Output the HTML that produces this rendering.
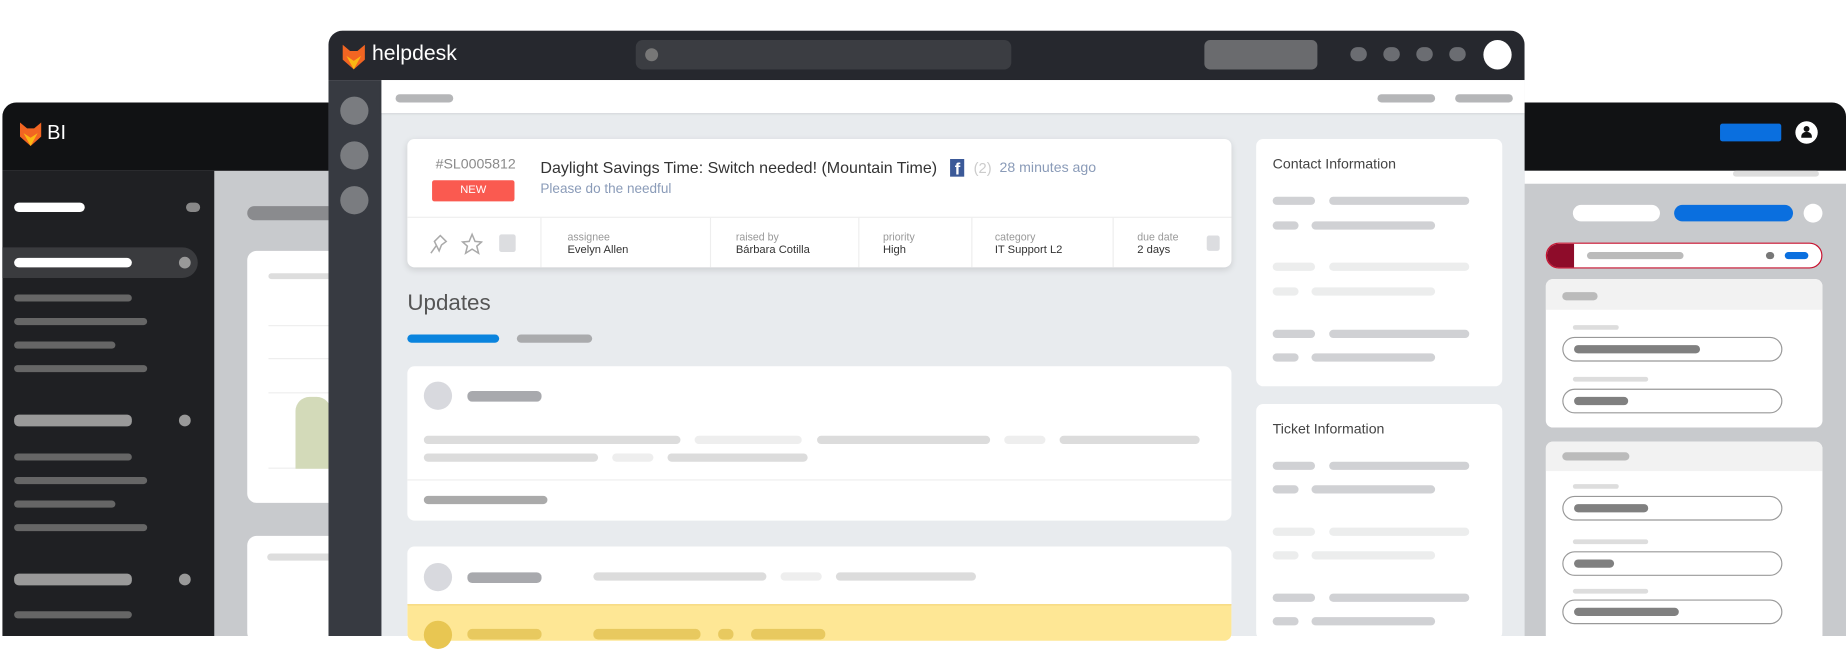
<!DOCTYPE html>
<html><head><meta charset="utf-8"><style>
*{margin:0;padding:0;box-sizing:border-box}
html,body{width:1846px;height:636px;overflow:hidden;background:#fff;font-family:"Liberation Sans",sans-serif}
#w{position:absolute;left:0;top:0;width:1568px;height:540px;transform:scale(1.17730,1.17778);transform-origin:0 0}
.a{position:absolute}
.b{position:absolute;border-radius:4px}
.t{position:absolute;white-space:nowrap}
</style></head><body><div id="w">
<div class="a" style="left:2px;top:87px;width:1566px;height:453px;background:#c8cacd;border-radius:12px 12px 0 0;overflow:hidden">
 <div class="a" style="left:0;top:0;width:1566px;height:58px;background:#111214"></div>
 <div class="a" style="left:0;top:58px;width:180px;height:395px;background:#1f2023"></div>
 <div class="a" style="left:1293px;top:58px;width:273px;height:11px;background:#fff"></div>
</div>
<svg class="a" style="left:16px;top:103px" width="20" height="22" viewBox="0 0 20 22"><polygon points="1,1 7,6 13,6 19,1 19,13 10,21 1,13" fill="#f26522"/><polygon points="4,10 10,14 16,10 10,21" fill="#fcb813"/></svg>
<div class="t" style="left:40px;top:103px;color:#fff;font-size:17px">BI</div>
<div class="b" style="left:1461px;top:105px;width:52px;height:15px;background:#0a6fdf;border-radius:2px"></div>
<div class="a" style="left:1525px;top:103px;width:19px;height:19px;border-radius:50%;background:#fff"></div>
<div class="a" style="left:1532px;top:107px;width:5px;height:5px;border-radius:50%;background:#111"></div>
<div class="a" style="left:1530px;top:112px;width:9px;height:5px;border-radius:4px 4px 0 0;background:#111"></div>
<div class="b" style="left:12px;top:172px;width:60px;height:8px;background:#fff"></div>
<div class="b" style="left:158px;top:172px;width:12px;height:8px;background:#888"></div>
<div class="a" style="left:2px;top:210px;width:166px;height:26px;background:#3a3b3e;border-radius:0 13px 13px 0"></div>
<div class="b" style="left:12px;top:219px;width:100px;height:8px;background:#fff"></div>
<div class="a" style="left:152px;top:218px;width:10px;height:10px;border-radius:50%;background:#999"></div>
<div class="b" style="left:12px;top:250px;width:100px;height:6px;background:#666"></div>
<div class="b" style="left:12px;top:270px;width:113px;height:6px;background:#666"></div>
<div class="b" style="left:12px;top:290px;width:86px;height:6px;background:#666"></div>
<div class="b" style="left:12px;top:310px;width:113px;height:6px;background:#666"></div>
<div class="b" style="left:12px;top:352px;width:100px;height:10px;background:#999"></div>
<div class="a" style="left:152px;top:352px;width:10px;height:10px;border-radius:50%;background:#999"></div>
<div class="b" style="left:12px;top:385px;width:100px;height:6px;background:#666"></div>
<div class="b" style="left:12px;top:405px;width:113px;height:6px;background:#666"></div>
<div class="b" style="left:12px;top:425px;width:86px;height:6px;background:#666"></div>
<div class="b" style="left:12px;top:445px;width:113px;height:6px;background:#666"></div>
<div class="b" style="left:12px;top:487px;width:100px;height:10px;background:#999"></div>
<div class="a" style="left:152px;top:487px;width:10px;height:10px;border-radius:50%;background:#999"></div>
<div class="b" style="left:12px;top:519px;width:100px;height:6px;background:#666"></div>
<div class="b" style="left:210px;top:175px;width:80px;height:12px;background:#8a8b8e;border-radius:6px"></div>
<div class="a" style="left:210px;top:213px;width:80px;height:214px;background:#fff;border-radius:8px"></div>
<div class="b" style="left:228px;top:232px;width:60px;height:5px;background:#ddd"></div>
<div class="a" style="left:228px;top:276px;width:60px;height:1px;background:#eee"></div>
<div class="a" style="left:228px;top:304px;width:60px;height:1px;background:#eee"></div>
<div class="a" style="left:228px;top:333px;width:60px;height:1px;background:#eee"></div>
<div class="a" style="left:228px;top:397px;width:60px;height:1px;background:#eee"></div>
<div class="a" style="left:251px;top:337px;width:30px;height:61px;background:#d3dab9;border-radius:12px 12px 0 0"></div>
<div class="a" style="left:210px;top:455px;width:80px;height:90px;background:#fff;border-radius:8px"></div>
<div class="b" style="left:227px;top:470px;width:60px;height:6px;background:#ddd"></div>
<div class="b" style="left:1472px;top:145px;width:73px;height:5px;background:#ddd"></div>
<div class="a" style="left:1336px;top:174px;width:74px;height:14px;background:#fff;border-radius:7px"></div>
<div class="a" style="left:1422px;top:174px;width:101px;height:14px;background:#0a6fdf;border-radius:7px"></div>
<div class="a" style="left:1532px;top:173px;width:16px;height:16px;background:#fff;border-radius:50%"></div>
<div class="a" style="left:1313px;top:206px;width:235px;height:22px;background:#fff;border:1.5px solid #c8102e;border-radius:11px;overflow:hidden"><div class="a" style="left:0;top:0;width:23px;height:22px;background:#8e0c2a"></div></div>
<div class="b" style="left:1348px;top:214px;width:82px;height:6px;background:#bbb"></div>
<div class="a" style="left:1500px;top:214px;width:7px;height:6px;border-radius:3px;background:#777"></div>
<div class="a" style="left:1516px;top:214px;width:20px;height:6px;border-radius:3px;background:#0a6fdf"></div>
<div class="a" style="left:1313px;top:237px;width:235px;height:126px;background:#fff;border-radius:6px;overflow:hidden"><div class="a" style="left:0;top:0;width:235px;height:26px;background:#f2f2f2"></div></div>
<div class="b" style="left:1327px;top:248px;width:30px;height:7px;background:#bbb"></div>
<div class="b" style="left:1336px;top:276px;width:39px;height:4px;background:#ddd"></div>
<div class="a" style="left:1327px;top:286px;width:187px;height:21px;border:1.5px solid #999;border-radius:11px"></div>
<div class="b" style="left:1337px;top:293px;width:107px;height:7px;background:#808080"></div>
<div class="b" style="left:1336px;top:320px;width:64px;height:4px;background:#ddd"></div>
<div class="a" style="left:1327px;top:330px;width:187px;height:21px;border:1.5px solid #999;border-radius:11px"></div>
<div class="b" style="left:1337px;top:337px;width:46px;height:7px;background:#808080"></div>
<div class="a" style="left:1313px;top:375px;width:235px;height:170px;background:#fff;border-radius:6px;overflow:hidden"><div class="a" style="left:0;top:0;width:235px;height:25px;background:#f2f2f2"></div></div>
<div class="b" style="left:1327px;top:384px;width:57px;height:7px;background:#bbb"></div>
<div class="b" style="left:1336px;top:411px;width:39px;height:4px;background:#ddd"></div>
<div class="a" style="left:1327px;top:421px;width:187px;height:21px;border:1.5px solid #999;border-radius:11px"></div>
<div class="b" style="left:1337px;top:428px;width:63px;height:7px;background:#808080"></div>
<div class="b" style="left:1336px;top:458px;width:64px;height:4px;background:#ddd"></div>
<div class="a" style="left:1327px;top:468px;width:187px;height:21px;border:1.5px solid #999;border-radius:11px"></div>
<div class="b" style="left:1337px;top:475px;width:34px;height:7px;background:#808080"></div>
<div class="b" style="left:1336px;top:500px;width:64px;height:4px;background:#ddd"></div>
<div class="a" style="left:1327px;top:509px;width:187px;height:21px;border:1.5px solid #999;border-radius:11px"></div>
<div class="b" style="left:1337px;top:516px;width:89px;height:7px;background:#808080"></div>

<div class="a" style="left:279px;top:26px;width:1016px;height:514px;background:#e8ebee;border-radius:12px 12px 0 0;overflow:hidden">
 <div class="a" style="left:0;top:0;width:1016px;height:42px;background:#26282e"></div>
 <div class="a" style="left:0;top:42px;width:45px;height:472px;background:#373a41"></div>
 <div class="a" style="left:45px;top:42px;width:971px;height:28px;background:#fff;box-shadow:0 1px 2px rgba(0,0,0,.15)"></div>
</div>
<svg class="a" style="left:290px;top:37px" width="21" height="23" viewBox="0 0 20 22"><polygon points="1,1 7,6 13,6 19,1 19,13 10,21 1,13" fill="#f26522"/><polygon points="4,10 10,14 16,10 10,21" fill="#fcb813"/></svg>
<div class="t" style="left:316px;top:35px;color:#fff;font-size:18px">helpdesk</div>
<div class="a" style="left:540px;top:34px;width:319px;height:25px;background:#3b3d42;border-radius:6px"></div>
<div class="a" style="left:548px;top:41px;width:11px;height:11px;background:#777;border-radius:50%"></div>
<div class="a" style="left:1023px;top:34px;width:96px;height:25px;background:#6a6b6e;border-radius:5px"></div>
<div class="a" style="left:1147px;top:40px;width:14px;height:12px;background:#6b6d72;border-radius:6px"></div>
<div class="a" style="left:1175px;top:40px;width:14px;height:12px;background:#6b6d72;border-radius:6px"></div>
<div class="a" style="left:1203px;top:40px;width:14px;height:12px;background:#6b6d72;border-radius:6px"></div>
<div class="a" style="left:1231px;top:40px;width:14px;height:12px;background:#6b6d72;border-radius:6px"></div>
<div class="a" style="left:1260px;top:34px;width:24px;height:25px;background:#fff;border-radius:50%"></div>
<div class="a" style="left:289px;top:82px;width:24px;height:24px;background:#7a7c80;border-radius:50%"></div>
<div class="a" style="left:289px;top:120px;width:24px;height:24px;background:#7a7c80;border-radius:50%"></div>
<div class="a" style="left:289px;top:158px;width:24px;height:24px;background:#7a7c80;border-radius:50%"></div>
<div class="b" style="left:336px;top:80px;width:49px;height:7px;background:#b5b6b8"></div>
<div class="b" style="left:1170px;top:80px;width:49px;height:7px;background:#b5b6b8"></div>
<div class="b" style="left:1236px;top:80px;width:49px;height:7px;background:#b5b6b8"></div>

<div class="a" style="left:346px;top:118px;width:700px;height:109px;background:#fff;border-radius:6px;box-shadow:0 2px 6px rgba(0,0,0,.12)"></div>
<div class="t" style="left:370px;top:132px;color:#8a8a8a;font-size:12px">#SL0005812</div>
<div class="a" style="left:367px;top:153px;width:70px;height:18px;background:#fa5a50;border-radius:2px;color:#fff;font-size:9.5px;text-align:center;line-height:18px">NEW</div>
<div class="t" style="left:459px;top:135px;color:#333;font-size:13.6px">Daylight Savings Time: Switch needed! (Mountain Time)</div>
<div class="a" style="left:807px;top:135px;width:12px;height:15px;background:#3b5998"></div>
<div class="t" style="left:811px;top:135px;color:#fff;font-size:14px;font-weight:bold">f</div>
<div class="t" style="left:827px;top:136px;color:#ccc;font-size:12.5px">(2)</div>
<div class="t" style="left:849px;top:135px;color:#8a9bb8;font-size:12px">28 minutes ago</div>
<div class="t" style="left:459px;top:155px;color:#8a9bb8;font-size:11.5px">Please do the needful</div>
<div class="a" style="left:346px;top:184px;width:700px;height:1px;background:#eee"></div>
<svg class="a" style="left:362px;top:197px" width="48" height="20" viewBox="0 0 48 20"><path d="M4 18 L9 11 M7 8 L12 3 L17 8 L13 11 L11 16 Z" fill="none" stroke="#aaa" stroke-width="1.3"/><path d="M39 2 L41.5 8 L47 8.5 L43 12 L44.5 18 L39 14.5 L33.5 18 L35 12 L31 8.5 L36.5 8 Z" fill="none" stroke="#aaa" stroke-width="1.3"/></svg>
<div class="a" style="left:424px;top:199px;width:14px;height:15px;background:#dcdde0;border-radius:2px"></div>
<div class="a" style="left:459px;top:185px;width:1px;height:42px;background:#eee"></div>
<div class="a" style="left:603px;top:185px;width:1px;height:42px;background:#eee"></div>
<div class="a" style="left:729px;top:185px;width:1px;height:42px;background:#eee"></div>
<div class="a" style="left:825px;top:185px;width:1px;height:42px;background:#eee"></div>
<div class="a" style="left:945px;top:185px;width:1px;height:42px;background:#eee"></div>
<div class="t" style="left:482px;top:196px;color:#999;font-size:9px">assignee</div>
<div class="t" style="left:482px;top:207px;color:#333;font-size:9.5px">Evelyn Allen</div>
<div class="t" style="left:625px;top:196px;color:#999;font-size:9px">raised by</div>
<div class="t" style="left:625px;top:207px;color:#333;font-size:9.5px">Bárbara Cotilla</div>
<div class="t" style="left:750px;top:196px;color:#999;font-size:9px">priority</div>
<div class="t" style="left:750px;top:207px;color:#333;font-size:9.5px">High</div>
<div class="t" style="left:845px;top:196px;color:#999;font-size:9px">category</div>
<div class="t" style="left:845px;top:207px;color:#333;font-size:9.5px">IT Support L2</div>
<div class="t" style="left:966px;top:196px;color:#999;font-size:9px">due date</div>
<div class="t" style="left:966px;top:207px;color:#333;font-size:9.5px">2 days</div>
<div class="a" style="left:1025px;top:200px;width:11px;height:13px;background:#dcdde0;border-radius:2px"></div>

<div class="t" style="left:346px;top:247px;color:#555;font-size:19px">Updates</div>
<div class="a" style="left:346px;top:284px;width:78px;height:7px;background:#0a84de;border-radius:4px"></div>
<div class="a" style="left:439px;top:284px;width:64px;height:7px;background:#aaabad;border-radius:4px"></div>

<div class="a" style="left:346px;top:311px;width:700px;height:131px;background:#fff;border-radius:6px"></div>
<div class="a" style="left:360px;top:324px;width:24px;height:24px;background:#d8d9de;border-radius:50%"></div>
<div class="b" style="left:397px;top:332px;width:63px;height:9px;background:#a8a9ad"></div>
<div class="b" style="left:360px;top:370px;width:218px;height:7px;background:#dcdcdc"></div>
<div class="b" style="left:590px;top:370px;width:91px;height:7px;background:#eee"></div>
<div class="b" style="left:694px;top:370px;width:147px;height:7px;background:#dcdcdc"></div>
<div class="b" style="left:853px;top:370px;width:35px;height:7px;background:#eee"></div>
<div class="b" style="left:900px;top:370px;width:119px;height:7px;background:#dcdcdc"></div>
<div class="b" style="left:360px;top:385px;width:148px;height:7px;background:#dcdcdc"></div>
<div class="b" style="left:520px;top:385px;width:35px;height:7px;background:#eee"></div>
<div class="b" style="left:567px;top:385px;width:119px;height:7px;background:#dcdcdc"></div>
<div class="a" style="left:346px;top:407px;width:700px;height:1px;background:#eee"></div>
<div class="b" style="left:360px;top:421px;width:105px;height:7px;background:#aaa"></div>

<div class="a" style="left:346px;top:464px;width:700px;height:80px;background:#fff;border-radius:6px;overflow:hidden"><div class="a" style="left:0;top:49px;width:700px;height:40px;background:#fee795;border-top:1px solid #f5d77a"></div></div>
<div class="a" style="left:360px;top:478px;width:24px;height:24px;background:#d8d9de;border-radius:50%"></div>
<div class="b" style="left:397px;top:486px;width:63px;height:9px;background:#a8a9ad"></div>
<div class="b" style="left:504px;top:486px;width:147px;height:7px;background:#dcdcdc"></div>
<div class="b" style="left:663px;top:486px;width:35px;height:7px;background:#eee"></div>
<div class="b" style="left:710px;top:486px;width:119px;height:7px;background:#dcdcdc"></div>
<div class="a" style="left:360px;top:527px;width:24px;height:24px;background:#e8c652;border-radius:50%"></div>
<div class="b" style="left:397px;top:534px;width:63px;height:9px;background:#e8c95f"></div>
<div class="b" style="left:504px;top:534px;width:91px;height:9px;background:#e8c95f"></div>
<div class="b" style="left:610px;top:534px;width:13px;height:9px;background:#e8c95f"></div>
<div class="b" style="left:638px;top:534px;width:63px;height:9px;background:#e8c95f"></div>

<div class="a" style="left:1067px;top:118px;width:209px;height:210px;background:#fff;border-radius:6px"></div>
<div class="t" style="left:1081px;top:132px;color:#444;font-size:12px">Contact Information</div>
<div class="b" style="left:1081px;top:167px;width:36px;height:7px;background:#d0d1d4"></div>
<div class="b" style="left:1129px;top:167px;width:119px;height:7px;background:#d0d1d4"></div>
<div class="b" style="left:1081px;top:188px;width:22px;height:7px;background:#d0d1d4"></div>
<div class="b" style="left:1114px;top:188px;width:105px;height:7px;background:#d0d1d4"></div>
<div class="b" style="left:1081px;top:223px;width:36px;height:7px;background:#eceded"></div>
<div class="b" style="left:1129px;top:223px;width:119px;height:7px;background:#eceded"></div>
<div class="b" style="left:1081px;top:244px;width:22px;height:7px;background:#eceded"></div>
<div class="b" style="left:1114px;top:244px;width:105px;height:7px;background:#eceded"></div>
<div class="b" style="left:1081px;top:280px;width:36px;height:7px;background:#d0d1d4"></div>
<div class="b" style="left:1129px;top:280px;width:119px;height:7px;background:#d0d1d4"></div>
<div class="b" style="left:1081px;top:300px;width:22px;height:7px;background:#d0d1d4"></div>
<div class="b" style="left:1114px;top:300px;width:105px;height:7px;background:#d0d1d4"></div>

<div class="a" style="left:1067px;top:343px;width:209px;height:200px;background:#fff;border-radius:6px"></div>
<div class="t" style="left:1081px;top:357px;color:#444;font-size:12px">Ticket Information</div>
<div class="b" style="left:1081px;top:392px;width:36px;height:7px;background:#d0d1d4"></div>
<div class="b" style="left:1129px;top:392px;width:119px;height:7px;background:#d0d1d4"></div>
<div class="b" style="left:1081px;top:412px;width:22px;height:7px;background:#d0d1d4"></div>
<div class="b" style="left:1114px;top:412px;width:105px;height:7px;background:#d0d1d4"></div>
<div class="b" style="left:1081px;top:448px;width:36px;height:7px;background:#eceded"></div>
<div class="b" style="left:1129px;top:448px;width:119px;height:7px;background:#eceded"></div>
<div class="b" style="left:1081px;top:468px;width:22px;height:7px;background:#eceded"></div>
<div class="b" style="left:1114px;top:468px;width:105px;height:7px;background:#eceded"></div>
<div class="b" style="left:1081px;top:504px;width:36px;height:7px;background:#d0d1d4"></div>
<div class="b" style="left:1129px;top:504px;width:119px;height:7px;background:#d0d1d4"></div>
<div class="b" style="left:1081px;top:524px;width:22px;height:7px;background:#d0d1d4"></div>
<div class="b" style="left:1114px;top:524px;width:105px;height:7px;background:#d0d1d4"></div>
</div></body></html>
